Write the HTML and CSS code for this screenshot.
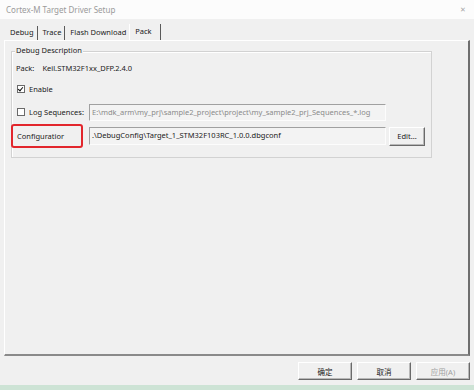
FILE: index.html
```html
<!DOCTYPE html>
<html lang="en">
<head>
    <meta charset="UTF-8">
    <title>Cortex-M Target Driver Setup</title>
    <link rel="stylesheet" href="styles.css">
</head>
<body>

<div class="window">
    <div class="titlebar">
        <span class="title">Cortex-M Target Driver Setup</span>
        <span class="close">&#10005;</span>
    </div>

    <div class="tabs">
        <span class="tab">Debug</span>
        <span class="tab">Trace</span>
        <span class="tab tab-plain">Flash Download</span>
        <span class="tab tab-active">Pack</span>
    </div>

    <div class="panel">
        <div class="group">
            <span class="legend">Debug Description</span>

            <div class="row row-pack">
                <span>Pack:</span>
                <span class="pack-name">Keil.STM32F1xx_DFP.2.4.0</span>
            </div>

            <div class="row row-enable">
                <span class="check checked"></span>
                <span>Enable</span>
            </div>

            <div class="row row-log">
                <div class="cell-label">
                    <span class="check"></span>
                    <span>Log Sequences:</span>
                </div>
                <div class="field field-disabled">E:\mdk_arm\my_prj\sample2_project\project\my_sample2_prj_Sequences_*.log</div>
            </div>

            <div class="row row-config">
                <div class="cell-label marked">Configuratior</div>
                <div class="field">.\DebugConfig\Target_1_STM32F103RC_1.0.0.dbgconf</div>
                <button class="btn btn-edit">Edit...</button>
            </div>
        </div>
    </div>

    <div class="footer">
        <button class="btn btn-dialog">确定</button>
        <button class="btn btn-dialog">取消</button>
        <button class="btn btn-dialog btn-disabled">应用(A)</button>
    </div>

    <div class="taskbar"></div>
</div>

</body>
</html>
```

FILE: styles.css
```css
body {
    margin: 0;
    padding: 0;
    background-color: #f0f0f0;
    font-family: "Noto Sans", "Noto Sans CJK SC", sans-serif;
    font-size: 7.5px;
    color: #1a1a1a;
}
.window {
    width: 474px;
    height: 390px;
    display: flex;
    flex-direction: column;
}

/* Titelleiste */
.titlebar {
    height: 19px;
    background-color: #fcfcfc;
    display: flex;
    align-items: center;
    justify-content: space-between;
    padding: 0 8px 0 6px;
    color: #9a9a9a;
    font-size: 8px;
}
.close {
    font-size: 7px;
    color: #a8a8a8;
}

/* Reiter */
.tabs {
    height: 21px;
    display: flex;
    align-items: flex-end;
    padding-left: 7px;
}
.tab {
    height: 14px;
    line-height: 13px;
    padding: 0 3px 0 3px;
    border-right: 1px solid #5a5a5a;
}
.tab + .tab {
    padding-left: 5px;
}
.tab-plain {
    border-right: none;
}
.tab-active {
    height: 16px;
    line-height: 14px;
    padding: 0 8px 0 5px;
    border-left: 1px solid #fff;
    border-right: 1px solid #5a5a5a;
}

/* Registerseite */
.panel {
    height: 313px;
    margin: 0 4px;
    border-top: 1px solid #fff;
    border-left: 1px solid #fff;
    border-right: 2px solid #6e6e6e;
    border-bottom: 2px solid #8a8a8a;
}
.group {
    position: relative;
    width: 419px;
    margin: 10px 0 0 6px;
    padding: 9px 0 9px 0;
    border: 1px solid #d2d2d2;
    box-shadow: inset 1px 1px #fff;
}
.legend {
    position: absolute;
    top: -7px;
    left: 3px;
    padding: 0 1px;
    background-color: #f0f0f0;
}
.row {
    display: flex;
    align-items: center;
}
.row-pack {
    height: 14px;
    padding-left: 4px;
}
.pack-name {
    margin-left: 8px;
}
.row-enable {
    height: 14px;
    margin-top: 7px;
    padding-left: 5px;
}
.row-log {
    height: 18px;
    margin-top: 7px;
}
.row-config {
    height: 24px;
    margin-top: 3px;
}
.cell-label {
    width: 72px;
    display: flex;
    align-items: center;
    padding-left: 5px;
}
.marked {
    box-sizing: border-box;
    width: 72px;
    height: 24px;
    margin-left: -1px;
    margin-right: 6px;
    padding-left: 4px;
    border: 2px solid #e2262c;
    border-radius: 3px;
}

/* Kontrollkästchen */
.check {
    box-sizing: border-box;
    width: 8px;
    height: 8px;
    margin-right: 4px;
    border: 1px solid #6a6a6a;
    background-color: #fff;
    position: relative;
}
.checked::after {
    content: "";
    position: absolute;
    left: 1px;
    top: 0px;
    width: 2px;
    height: 4px;
    border-right: 1.5px solid #111;
    border-bottom: 1.5px solid #111;
    transform: rotate(40deg);
}

/* Eingabefelder */
.field {
    box-sizing: border-box;
    width: 297px;
    height: 17px;
    line-height: 15px;
    padding-left: 2px;
    border-top: 1px solid #a0a0a0;
    border-left: 1px solid #a0a0a0;
    border-right: 1px solid #fcfcfc;
    border-bottom: 1px solid #fcfcfc;
    background-color: #f3f3f3;
    white-space: nowrap;
    overflow: hidden;
}
.field-disabled {
    color: #8a8a8a;
}
.row-config .field {
    height: 18px;
}

/* Schaltflächen */
.btn {
    box-sizing: border-box;
    font-family: "Noto Sans", "Noto Sans CJK SC", sans-serif;
    font-size: 7.5px;
    color: #1a1a1a;
    background-color: #f0f0f0;
    border-top: 1px solid #fff;
    border-left: 1px solid #fff;
    border-right: 1px solid #6a6a6a;
    border-bottom: 1px solid #6a6a6a;
    box-shadow: inset -1px -1px #b8b8b8;
    padding: 0;
}
.btn-edit {
    width: 36px;
    height: 19px;
    margin-left: 3px;
}
.footer {
    height: 29px;
    display: flex;
    justify-content: flex-end;
    align-items: flex-start;
    gap: 5px;
    padding: 6px 4px 0 0;
    box-sizing: border-box;
}
.btn-dialog {
    width: 54px;
    height: 18px;
}
.btn-disabled {
    color: #a0a0a0;
}
.taskbar {
    height: 5px;
    background-color: #cde3d5;
}
```
